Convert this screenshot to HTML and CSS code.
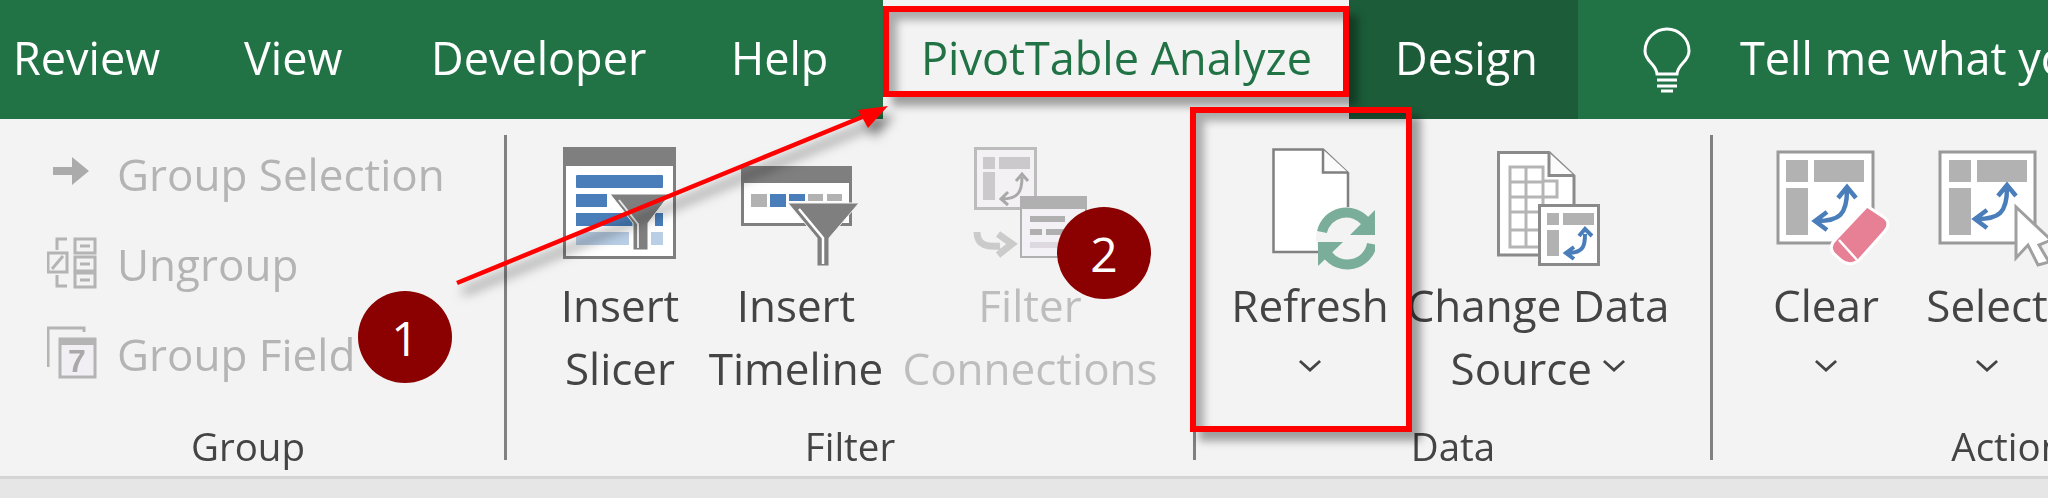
FILE: index.html
```html
<!DOCTYPE html>
<html lang="en">
<head>
<meta charset="utf-8">
<title>PivotTable Analyze ribbon</title>
<link rel="stylesheet" href="styles.css">
</head>
<body>
<div class="page">
  <nav class="tabs">
    <div class="tab tab-review">Review</div>
    <div class="tab tab-view">View</div>
    <div class="tab tab-developer">Developer</div>
    <div class="tab tab-help">Help</div>
    <div class="tab tab-pivot">PivotTable Analyze</div>
    <div class="tab tab-design">Design</div>
    <div class="tell">
      <svg class="bulb" viewBox="1640 24 56 70"><path d="M1657 73C1656 62 1645 61 1645 50A22 22 0 0 1 1689 50C1689 61 1678 62 1677 73Z" fill="none" stroke="#fff" stroke-width="3"/><path d="M1657 79H1677M1657 85H1677M1661 90H1673" stroke="#fff" stroke-width="3"/></svg>
      <span>Tell me what you want to do</span>
    </div>
  </nav>

  <main class="ribbon">
    <section class="group group-a">
      <div class="rows">
        <div class="row">
          <svg class="row-icon" viewBox="47 144 50 60"><path d="M53 167H72V157L89 171 72 185V175H53Z" fill="#ababab"/></svg>
          <span>Group Selection</span>
        </div>
        <div class="row">
          <svg class="row-icon" viewBox="47 234 50 60" fill="none" stroke="#b4b4b4" stroke-width="3"><path d="M67 239H57V250M57 275V286H67"/><rect x="48" y="253" width="19" height="19"/><path d="M52 269L63 256"/><rect x="75" y="239" width="20" height="14"/><rect x="75" y="257" width="20" height="14"/><rect x="75" y="273" width="20" height="14"/><path d="M80 246H90M80 264H90M80 280H90"/></svg>
          <span>Ungroup</span>
        </div>
        <div class="row">
          <svg class="row-icon" viewBox="47 324 50 60"><path d="M48 367V328H84V332" fill="none" stroke="#b4b4b4" stroke-width="3"/><rect x="60" y="339" width="35" height="38" fill="#f2eff4" stroke="#b4b4b4" stroke-width="3"/><rect x="60" y="339" width="35" height="6" fill="#b4b4b4"/><text x="77" y="372" class="seven">7</text></svg>
          <span>Group Field</span>
        </div>
      </div>
      <div class="group-label">Group</div>
    </section>

    <section class="group group-b">
      <div class="tools">
        <div class="tool tool-slicer">
          <svg class="tool-icon" viewBox="555 140 130 130">
            <rect x="564.5" y="148.500" width="110" height="109" fill="#fff" stroke="#7f7f7f" stroke-width="3"/>
            <rect x="563" y="147" width="113" height="19" fill="#7f7f7f"/>
            <rect x="576" y="175" width="87" height="13" rx="1" fill="#4a7ebb"/>
            <rect x="576" y="194" width="31" height="13" fill="#4a7ebb"/>
            <rect x="576" y="213" width="60" height="13" fill="#4a7ebb"/>
            <rect x="655" y="213" width="8" height="13" fill="#4a7ebb"/>
            <rect x="576" y="232" width="53" height="13" fill="#b9cfe6"/>
            <rect x="651" y="232" width="12" height="13" fill="#b9cfe6"/>
            <path d="M610 194H670L648 223V250H633V223Z" fill="#7f7f7f" stroke="#fff" stroke-width="1"/>
            <path d="M619 200L638 224V248" fill="none" stroke="#e8e8e8" stroke-width="2"/>
          </svg>
          <div class="tool-text">Insert<br>Slicer</div>
        </div>
        <div class="tool tool-timeline">
          <svg class="tool-icon" viewBox="731 140 130 130">
            <rect x="742.500" y="167.500" width="108" height="57" fill="#fff" stroke="#7f7f7f" stroke-width="3"/>
            <rect x="741" y="166" width="111" height="17" fill="#7f7f7f"/>
            <rect x="751" y="194" width="16" height="13" fill="#b2b2b2"/>
            <rect x="770" y="194" width="16" height="13" fill="#4a7ebb"/>
            <rect x="789" y="194" width="16" height="7" fill="#4a7ebb"/>
            <rect x="808" y="194" width="15" height="7" fill="#b2b2b2"/>
            <rect x="827" y="194" width="15" height="7" fill="#b2b2b2"/>
            <path d="M788 203H859L829 238V266H817V238Z" fill="#7f7f7f" stroke="#f3f3f3" stroke-width="1"/>
            <path d="M799 209L823 238V264" fill="none" stroke="#fff" stroke-width="2.500"/>
          </svg>
          <div class="tool-text">Insert<br>Timeline</div>
        </div>
        <div class="tool tool-filter disabled">
          <svg class="tool-icon" viewBox="965 140 130 130">
            <rect x="975.500" y="148.500" width="60" height="60" fill="#f4f1f5" stroke="#bcbcbc" stroke-width="3"/>
            <rect x="983" y="157" width="12" height="12" fill="#cbc9cc"/>
            <rect x="999" y="157" width="31" height="12" fill="#cbc9cc"/>
            <rect x="983" y="172" width="12" height="28" fill="#cbc9cc"/>
            <path d="M1002 199C1018 199 1022 192 1022 177M1008 192L1001 199 1008 205M1016 181L1022 174 1028 181" fill="none" stroke="#a9a9a9" stroke-width="3"/>
            <rect x="1021" y="197" width="65" height="60" fill="#f3f1f5" stroke="#b0b0b0" stroke-width="2"/>
            <rect x="1021" y="197" width="65" height="12" fill="#b0b0b0"/>
            <rect x="1030" y="216" width="35" height="6" fill="#b0b0b0"/>
            <rect x="1030" y="229" width="12" height="6" fill="#b0b0b0"/>
            <rect x="1046" y="229" width="20" height="6" fill="#b0b0b0"/>
            <rect x="1030" y="242" width="28" height="6" fill="#ded9e0"/>
            <path d="M977 232C977 246 988 247 1000 246M998 234L1012 244 998 255" fill="none" stroke="#cbcbcb" stroke-width="7"/>
          </svg>
          <div class="tool-text">Filter<br>Connections</div>
        </div>
      </div>
      <div class="group-label">Filter</div>
    </section>

    <section class="group group-c">
      <div class="tools">
        <div class="tool tool-refresh">
          <svg class="tool-icon" viewBox="1245 140 130 130">
            <path d="M1273.500 149.500H1323L1348 173V252H1273.500Z" fill="#fff" stroke="#808080" stroke-width="2.500"/>
            <path d="M1323 149.500V172.500H1348" fill="#fbfbfb" stroke="#808080" stroke-width="2.500"/>
            <circle cx="1347" cy="238" r="31" fill="#f3f3f3"/>
            <path d="M1322 232A25 25 0 0 1 1366 222M1372 244A25 25 0 0 1 1327 254" fill="none" stroke="#7aae9a" stroke-width="10"/>
            <path d="M1375 210V235H1350ZM1318 242V266L1343 242Z" fill="#7aae9a"/>
          </svg>
          <div class="tool-text">Refresh<br><svg class="chev" viewBox="0 0 24 14"><path d="M1 2L12 12 23 2" fill="none" stroke="#444" stroke-width="3"/></svg></div>
        </div>
        <div class="tool tool-change">
          <svg class="tool-icon" viewBox="1473 140 130 130">
            <path d="M1498.500 152.500H1549L1574 176V255H1498.500Z" fill="#fff" stroke="#8a8a8a" stroke-width="3"/>
            <path d="M1549 152.500V175.500H1574" fill="#fbfbfb" stroke="#8a8a8a" stroke-width="3"/>
            <path d="M1510 167H1543V181H1557V197H1543V247H1510ZM1510 182H1543M1510 197H1543M1510 212H1540M1510 230H1540M1526 167V247M1543 181V197" fill="none" stroke="#b5b5b5" stroke-width="3"/>
            <rect x="1539.500" y="205.500" width="59" height="59" fill="#fff" stroke="#8a8a8a" stroke-width="3"/>
            <rect x="1547" y="213" width="12" height="12" fill="#b2b2b2"/>
            <rect x="1563" y="213" width="31" height="12" fill="#b2b2b2"/>
            <rect x="1547" y="230" width="12" height="26" fill="#b2b2b2"/>
            <path d="M1568 253C1584 253 1585 245 1585 234M1574 247L1566 253 1574 259M1579 236L1585 229 1592 236" fill="none" stroke="#4a7ebb" stroke-width="4"/>
          </svg>
          <div class="tool-text">Change Data<br>Source <svg class="chev" viewBox="0 0 24 14"><path d="M1 2L12 12 23 2" fill="none" stroke="#444" stroke-width="3"/></svg></div>
        </div>
      </div>
      <div class="group-label">Data</div>
    </section>

    <section class="group group-d">
      <div class="tools">
        <div class="tool tool-clear">
          <svg class="tool-icon" viewBox="1760 140 130 130">
            <rect x="1777" y="152" width="95" height="91" fill="#fff" stroke="#999" stroke-width="3"/>
            <rect x="1785" y="160" width="22" height="22" fill="#b2b2b2"/>
            <rect x="1813" y="160" width="50" height="22" fill="#b2b2b2"/>
            <rect x="1785" y="188" width="22" height="47" fill="#b2b2b2"/>
            <path d="M1816 221C1838 221 1846 215 1846 190M1826 212L1814 221 1826 230M1837 198L1846 187 1855 198" fill="none" stroke="#4a7ebb" stroke-width="4.500"/>
            <path d="M1866 206L1884 218Q1890 224 1884 231L1859 259Q1849 268 1840 260L1833 254Q1827 247 1834 240Z" fill="#e77f95" stroke="#fff" stroke-width="3"/>
            <path d="M1838 240L1856 260" stroke="#fff" stroke-width="2.500"/>
          </svg>
          <div class="tool-text">Clear<br><svg class="chev" viewBox="0 0 24 14"><path d="M1 2L12 12 23 2" fill="none" stroke="#444" stroke-width="3"/></svg></div>
        </div>
        <div class="tool tool-select">
          <svg class="tool-icon" viewBox="1921 140 130 130">
            <rect x="1939" y="152" width="95" height="91" fill="#fff" stroke="#999" stroke-width="3"/>
            <rect x="1948" y="160" width="22" height="22" fill="#b2b2b2"/>
            <rect x="1976" y="160" width="50" height="22" fill="#b2b2b2"/>
            <rect x="1948" y="188" width="22" height="47" fill="#b2b2b2"/>
            <path d="M1976 219C1998 219 2006 213 2006 188M1986 210L1974 219 1986 228M1997 196L2006 185 2015 196" fill="none" stroke="#4a7ebb" stroke-width="4.500"/>
            <path d="M2015 207V258L2027 245 2037 265 2048 262 2038 245 2050 240Z" fill="#fff" stroke="#a0a0a0" stroke-width="3"/>
          </svg>
          <div class="tool-text">Select<br><svg class="chev" viewBox="0 0 24 14"><path d="M1 2L12 12 23 2" fill="none" stroke="#444" stroke-width="3"/></svg></div>
        </div>
      </div>
      <div class="group-label">Actions</div>
    </section>
  </main>

  <footer class="status"></footer>

  <div class="mark mark-tab"></div>
  <div class="mark mark-refresh"></div>
  <svg class="arrow" viewBox="0 0 2048 498"><path d="M457 283L872 113" stroke="#f00" stroke-width="4.500" fill="none"/><path d="M888 106L858 110 868 128Z" fill="#f00"/></svg>
  <div class="badge badge-one">1</div>
  <div class="badge badge-two">2</div>
</div>
</body>
</html>
```

FILE: styles.css
```css
* { box-sizing: border-box; }
html, body { margin: 0; padding: 0; }
body { width: 2048px; height: 498px; overflow: hidden; background: #f3f3f3; font-family: "Open Sans", "Noto Sans", sans-serif; }
.page { position: relative; width: 2048px; height: 498px; overflow: hidden; display: flex; flex-direction: column; }

.tabs { display: grid; grid-template-columns: 244px 187px 300px 152px 466px 229px 470px; height: 119px; flex: none; background: #217346; color: #fff; font-size: 45px; line-height: 116px; white-space: nowrap; overflow: hidden; filter: blur(0.5px); }
.tab-review { padding-left: 13px; }
.tab-pivot { background: #f3f3f3; color: #217346; padding-left: 38px; }
.tab-design { background: #1c5c39; padding-left: 46px; }
.tell { display: flex; align-items: center; gap: 47px; padding-left: 65px; height: 116px; }
.bulb { width: 56px; height: 70px; flex: none; margin-top: 3px; margin-left: -3px; margin-right: -3px; }

.ribbon { display: flex; height: 357px; flex: none; padding-top: 16px; font-size: 44px; color: #444; white-space: nowrap; overflow: hidden; filter: blur(0.5px); }
.group { flex: none; height: 325px; display: flex; flex-direction: column; border-right: 3px solid #808080; }
.group-a { width: 507px; }
.group-b { width: 689px; }
.group-c { width: 517px; }
.group-d { width: 608px; border-right: 0; }
.group-b .tools { padding-left: 27px; }
.group-c .tools { padding-left: 40px; }
.group-d .tools { padding-left: 38px; }

.rows { display: flex; flex-direction: column; gap: 30px; padding: 0 0 0 47px; margin-top: 9px; color: #b4b4b4; }
.row { display: flex; align-items: center; gap: 20px; height: 60px; line-height: 60px; }
.row-icon { width: 50px; height: 60px; flex: none; }
.seven { font-family: "Liberation Sans", sans-serif; font-size: 32px; font-weight: 700; fill: #a9a9a9; text-anchor: middle; }

.tools { display: flex; padding-top: 5px; }
.tool { flex: none; display: flex; flex-direction: column; align-items: center; text-align: center; }
.tool-icon { width: 130px; height: 130px; flex: none; }
.tool-text { margin-top: 4px; line-height: 63px; }
.disabled { color: #bdbdbd; }
.tool-slicer { width: 172px; }
.tool-timeline { width: 180px; }
.tool-filter { width: 288px; }
.tool-refresh { width: 148px; }
.tool-change { width: 308px; }
.tool-clear { width: 150px; }
.tool-select { width: 172px; }
.chev { width: 22px; height: 13px; vertical-align: 13px; }

.group-label { margin-top: auto; margin-bottom: -8px; font-size: 38.5px; line-height: 44px; text-align: center; color: #444; }
.group-a .group-label { padding-right: 8px; }

.status { flex: none; height: 22px; background: #e6e6e6; border-top: 3px solid #d5d5d5; }

.mark { position: absolute; border: 6px solid #f00; box-shadow: 9px 9px 8px rgba(0, 0, 0, 0.35), inset 8px 8px 8px rgba(0, 0, 0, 0.3); }
.mark-tab { left: 883px; top: 6px; width: 466px; height: 91px; }
.mark-refresh { left: 1190px; top: 107px; width: 222px; height: 325px; }
.arrow { position: absolute; left: 0; top: 0; width: 2048px; height: 498px; filter: drop-shadow(6px 9px 6px rgba(0, 0, 0, 0.55)); }
.badge { position: absolute; width: 94px; height: 92px; border-radius: 50%; background: #8b0000; color: #fff; font-size: 48px; font-weight: 400; display: flex; align-items: center; justify-content: center; }
.badge-one { left: 358px; top: 291px; }
.badge-two { left: 1057px; top: 207px; }
```
